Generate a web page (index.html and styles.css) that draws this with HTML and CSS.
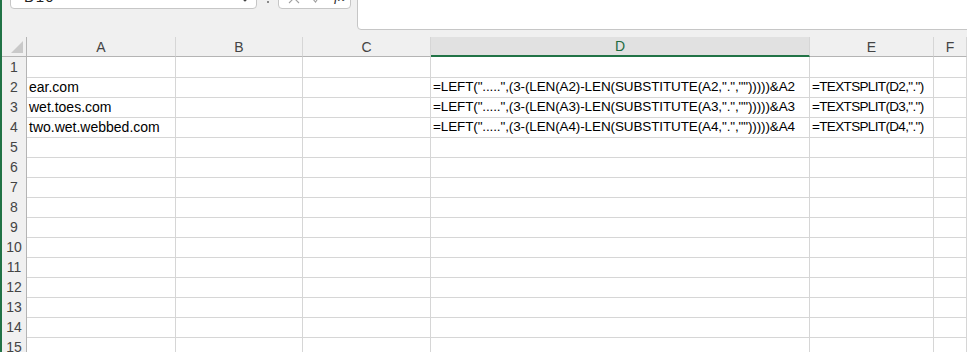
FILE: index.html
```html
<!DOCTYPE html>
<html>
<head>
<meta charset="utf-8">
<link rel="stylesheet" href="styles.css">
</head>
<body>
<div class="app">
  <div class="edge"></div>
  <div class="main">
    <div class="toolbar">
      <div class="namebox">
        <span class="namebox-text">D10</span>
        <svg class="namebox-arrow" width="10" height="6" viewBox="0 0 10 6"><path d="M1 1 L5 5 L9 1" fill="none" stroke="#444" stroke-width="1.2"/></svg>
      </div>
      <div class="dots"><span></span><span></span><span></span></div>
      <div class="fxbox">
        <svg class="fx-icon" width="12" height="12" viewBox="0 0 12 12"><path d="M1 1 L11 11 M11 1 L1 11" stroke="#a0a0a0" stroke-width="1.1"/></svg>
        <svg class="fx-icon" width="12" height="12" viewBox="0 0 12 12"><path d="M1 6 L4.5 10 L11 1" fill="none" stroke="#a0a0a0" stroke-width="1.1"/></svg>
        <span class="fx-text">fx</span>
      </div>
      <div class="formula"></div>
    </div>
    <div class="sheet">
      <div class="row head">
        <div class="hcell corner"><svg width="12" height="12" viewBox="0 0 12 12"><polygon points="12,0 12,12 0,12" fill="#c9c9c9"/></svg></div>
        <div class="hcell">A</div>
        <div class="hcell">B</div>
        <div class="hcell">C</div>
        <div class="hcell sel">D</div>
        <div class="hcell">E</div>
        <div class="hcell">F</div>
      </div>
      <div class="row"><div class="rh">1</div><div class="c"></div><div class="c"></div><div class="c"></div><div class="c"></div><div class="c"></div><div class="c"></div></div>
      <div class="row"><div class="rh">2</div><div class="c">ear.com</div><div class="c"></div><div class="c"></div><div class="c f1">=LEFT(".....",(3-(LEN(A2)-LEN(SUBSTITUTE(A2,".","")))))&amp;A2</div><div class="c f2">=TEXTSPLIT(D2,".")</div><div class="c"></div></div>
      <div class="row"><div class="rh">3</div><div class="c">wet.toes.com</div><div class="c"></div><div class="c"></div><div class="c f1">=LEFT(".....",(3-(LEN(A3)-LEN(SUBSTITUTE(A3,".","")))))&amp;A3</div><div class="c f2">=TEXTSPLIT(D3,".")</div><div class="c"></div></div>
      <div class="row"><div class="rh">4</div><div class="c">two.wet.webbed.com</div><div class="c"></div><div class="c"></div><div class="c f1">=LEFT(".....",(3-(LEN(A4)-LEN(SUBSTITUTE(A4,".","")))))&amp;A4</div><div class="c f2">=TEXTSPLIT(D4,".")</div><div class="c"></div></div>
      <div class="row"><div class="rh">5</div><div class="c"></div><div class="c"></div><div class="c"></div><div class="c"></div><div class="c"></div><div class="c"></div></div>
      <div class="row"><div class="rh">6</div><div class="c"></div><div class="c"></div><div class="c"></div><div class="c"></div><div class="c"></div><div class="c"></div></div>
      <div class="row"><div class="rh">7</div><div class="c"></div><div class="c"></div><div class="c"></div><div class="c"></div><div class="c"></div><div class="c"></div></div>
      <div class="row"><div class="rh">8</div><div class="c"></div><div class="c"></div><div class="c"></div><div class="c"></div><div class="c"></div><div class="c"></div></div>
      <div class="row"><div class="rh">9</div><div class="c"></div><div class="c"></div><div class="c"></div><div class="c"></div><div class="c"></div><div class="c"></div></div>
      <div class="row"><div class="rh">10</div><div class="c"></div><div class="c"></div><div class="c"></div><div class="c"></div><div class="c"></div><div class="c"></div></div>
      <div class="row"><div class="rh">11</div><div class="c"></div><div class="c"></div><div class="c"></div><div class="c"></div><div class="c"></div><div class="c"></div></div>
      <div class="row"><div class="rh">12</div><div class="c"></div><div class="c"></div><div class="c"></div><div class="c"></div><div class="c"></div><div class="c"></div></div>
      <div class="row"><div class="rh">13</div><div class="c"></div><div class="c"></div><div class="c"></div><div class="c"></div><div class="c"></div><div class="c"></div></div>
      <div class="row"><div class="rh">14</div><div class="c"></div><div class="c"></div><div class="c"></div><div class="c"></div><div class="c"></div><div class="c"></div></div>
      <div class="row"><div class="rh">15</div><div class="c"></div><div class="c"></div><div class="c"></div><div class="c"></div><div class="c"></div><div class="c"></div></div>
    </div>
  </div>
</div>
</body>
</html>
```

FILE: styles.css
```css
html, body {
  margin: 0;
  padding: 0;
  width: 967px;
  height: 352px;
  overflow: hidden;
  background: #ffffff;
  font-family: "Liberation Sans", Arial, sans-serif;
}

.app {
  display: flex;
  width: 967px;
  height: 352px;
  overflow: hidden;
}

.edge {
  width: 2px;
  flex: none;
  background: #217346;
}

.main {
  flex: 1;
  min-width: 0;
  display: flex;
  flex-direction: column;
  overflow: hidden;
}

.toolbar {
  height: 37px;
  flex: none;
  background: #f0f0f0;
  display: flex;
  align-items: flex-start;
  overflow: hidden;
}

.namebox {
  box-sizing: border-box;
  width: 247px;
  height: 30px;
  margin-top: -21px;
  margin-left: 8px;
  background: #fff;
  border: 1px solid #c6c6c6;
  border-radius: 4px;
  display: flex;
  align-items: flex-end;
  padding: 0 6px 0 13px;
}

.namebox-text {
  flex: 1;
  font-size: 15px;
  letter-spacing: 1px;
  line-height: 16px;
  color: #222;
  margin-bottom: 3px;
}

.namebox-arrow {
  margin-bottom: 6px;
}

.dots {
  display: flex;
  flex-direction: column;
  gap: 2px;
  margin-top: -7px;
  margin-left: 10px;
  width: 2px;
}

.dots span {
  width: 2px;
  height: 2px;
  background: #8a8a8a;
}

.fxbox {
  box-sizing: border-box;
  width: 73px;
  height: 30px;
  margin-top: -21px;
  margin-left: 9px;
  background: #fff;
  border: 1px solid #c6c6c6;
  border-radius: 4px;
  display: flex;
  align-items: flex-end;
  padding: 0 6px 0 9px;
  gap: 11px;
}

.fx-icon {
  margin-bottom: 4px;
  flex: none;
}

.fx-text {
  font-family: "Liberation Serif", serif;
  font-style: italic;
  font-size: 15px;
  line-height: 16px;
  color: #333;
  margin-bottom: 4px;
}

.formula {
  box-sizing: border-box;
  flex: 1;
  height: 51px;
  margin-top: -21px;
  margin-left: 6px;
  margin-right: -10px;
  background: #fff;
  border: 1px solid #c6c6c6;
  border-radius: 4px;
}

.sheet {
  flex: 1;
  display: flex;
  flex-direction: column;
}

.row {
  display: grid;
  grid-template-columns: 25px 149px 127px 128px 379px 124px 1fr;
  height: 20px;
  flex: none;
}

.head {
  background: #f0f0f0;
}

.hcell {
  box-sizing: border-box;
  height: 20px;
  border-bottom: 1px solid #b4b4b4;
  border-right: 1px solid #d6d6d6;
  color: #444;
  font-size: 14px;
  line-height: 20px;
  text-align: center;
}

.hcell.sel {
  background: #e1e1e1;
  color: #1e6b40;
  border-bottom: 2px solid #217346;
  line-height: 19px;
}

.hcell.corner {
  border-right: 1px solid #b4b4b4;
  display: flex;
  align-items: flex-end;
  justify-content: flex-end;
  padding: 0 3px 3px 0;
}

.rh {
  box-sizing: border-box;
  background: #f0f0f0;
  border-right: 1px solid #b4b4b4;
  border-bottom: 1px solid #d6d6d6;
  color: #444;
  font-size: 14px;
  line-height: 20px;
  text-align: center;
}

.c {
  box-sizing: border-box;
  border-right: 1px solid #d6d6d6;
  border-bottom: 1px solid #d6d6d6;
  font-size: 14px;
  line-height: 20px;
  color: #000;
  padding-left: 2px;
  white-space: nowrap;
  overflow: visible;
}

.c.f1 {
  font-size: 13.5px;
  letter-spacing: -0.12px;
}

.c.f2 {
  font-size: 13.5px;
  letter-spacing: -0.65px;
}
```
